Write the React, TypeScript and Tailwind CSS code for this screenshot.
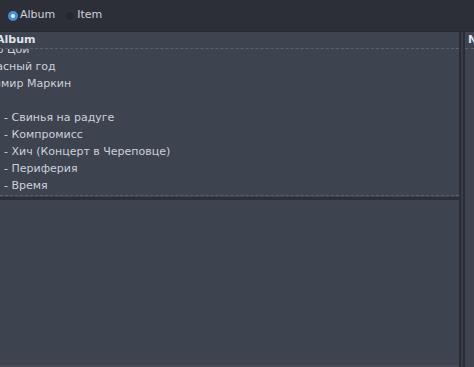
const tracks = ['Свинья на радуге', 'Компромисс', 'Хич (Концерт в Череповце)', 'Периферия', 'Время']

function Radio({ checked, label }: { checked?: boolean; label: string }) {
  return (
    <label className="flex items-center gap-[2px]">
      {checked ? (
        <span className="flex h-[10px] w-[10px] items-center justify-center rounded-full bg-[#3f8ee0]">
          <span className="h-[4px] w-[4px] rounded-full bg-[#e6eefc]" />
        </span>
      ) : (
        <span className="h-[10px] w-[10px] rounded-full border border-[#2f323a] bg-[#24272e]" />
      )}
      <span>{label}</span>
    </label>
  )
}

/** line whose start is scrolled out of view on the left */
function Clipped({ hidden, shown, at }: { hidden: string; shown: string; at: string }) {
  return (
    <div className="flex whitespace-pre">
      <span className={`flex shrink-0 justify-end ${at}`}>{hidden}</span>
      <span>{shown}</span>
    </div>
  )
}

export default function App() {
  return (
    <div className="flex h-[367px] w-[474px] flex-col overflow-hidden bg-[#3e4350] font-['DejaVu_Sans',sans-serif] text-[11px] text-[#cdd1d8]">
      <div className="flex h-[32px] shrink-0 items-center gap-[10px] border-b border-[#272a31] bg-[#2c2f37] pl-[8px]">
        <Radio checked label="Album" />
        <Radio label="Item" />
      </div>

      <div className="flex min-h-0 flex-1">
        <div className="flex w-[459px] shrink-0 flex-col">
          <div className="flex h-[164px] shrink-0 flex-col overflow-hidden border-b border-dashed border-[#5b606c]">
            <div className="flex h-[17px] shrink-0 items-center border-b border-dashed border-[#5b606c] font-bold text-[#dfe2e7]">
              <span className="-ml-[4px]">Album</span>
            </div>
            <div className="min-h-0 flex-1 overflow-hidden leading-[17px]">
              <div className="-mt-[8px]">
                <Clipped hidden="Виктор " shown="Цой" at="w-[7px]" />
                <Clipped hidden="Прекра" shown="сный год" at="w-[3px]" />
                <Clipped hidden="Влади" shown="мир Маркин" at="w-[1px]" />
                <div className="h-[17px]" />
                {tracks.map((t) => (
                  <div key={t} className="whitespace-pre pl-[4px]">
                    - {t}
                  </div>
                ))}
              </div>
            </div>
          </div>
          <div className="h-[1px] shrink-0 bg-[#3e4350]" />
          <div className="h-[3px] shrink-0 bg-[#2c2f38]" />
          <div className="min-h-0 flex-1 border-b-2 border-[#464b57] bg-[#3e4350]" />
        </div>

        <div className="w-[2px] shrink-0 bg-[#2a2d35]" />
        <div className="w-[2px] shrink-0 bg-[#393d48]" />
        <div className="w-[2px] shrink-0 bg-[#2a2d35]" />

        <div className="flex min-w-0 flex-1 flex-col bg-[#3e4350]">
          <div className="flex h-[17px] items-center border-b border-dashed border-[#5b606c] pl-[3px] font-bold text-[#dfe2e7]">
            Name
          </div>
        </div>
      </div>
    </div>
  )
}
